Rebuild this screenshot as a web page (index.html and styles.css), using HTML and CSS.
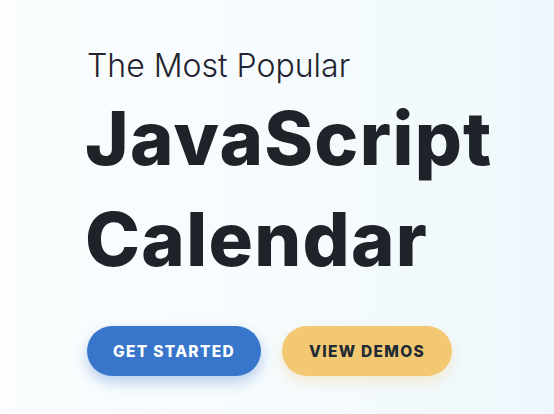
FILE: index.html
```html
<!DOCTYPE html>
<html lang="en">
<head>
<meta charset="utf-8">
<link rel="stylesheet" href="styles.css">
</head>
<body>
<section class="hero">
  <p class="subtitle">The Most Popular</p>
  <h1 class="title">JavaScript<br>Calendar</h1>
  <div class="actions">
    <a class="btn btn-primary" href="#">GET STARTED</a>
    <a class="btn btn-secondary" href="#">VIEW DEMOS</a>
  </div>
</section>
</body>
</html>
```
FILE: styles.css
```css
html, body {
  margin: 0;
  padding: 0;
  height: 100%;
}
body {
  background: linear-gradient(90deg, #fbfdfe 0%, #f6fbfd 50%, #eef8fc 100%);
  font-family: "Inter", "Noto Sans", sans-serif;
  color: #1f2329;
  overflow: hidden;
}
.hero {
  padding: 44px 0 0 87px;
  display: flex;
  flex-direction: column;
}
.subtitle {
  margin: 0;
  font-size: 32px;
  font-weight: 300;
  line-height: 44px;
  color: #23232f;
}
.title {
  margin: 0 0 0 -2px;
  font-size: 74px;
  font-weight: 800;
  line-height: 101px;
  letter-spacing: 1.3px;
  color: #1f2329;
}
.actions {
  display: flex;
  gap: 21px;
  margin-top: 36px;
}
.btn {
  display: flex;
  align-items: center;
  justify-content: center;
  height: 50px;
  border-radius: 25px;
  font-size: 15.5px;
  font-weight: 800;
  letter-spacing: 1.3px;
  text-decoration: none;
}
.btn-primary {
  width: 174px;
  background: #3876cb;
  color: #fff;
  box-shadow: 0 6px 14px rgba(56, 118, 203, 0.35);
}
.btn-secondary {
  width: 170px;
  background: #f2c872;
  color: #1f2a33;
  box-shadow: 0 6px 14px rgba(242, 200, 114, 0.3);
}
```
